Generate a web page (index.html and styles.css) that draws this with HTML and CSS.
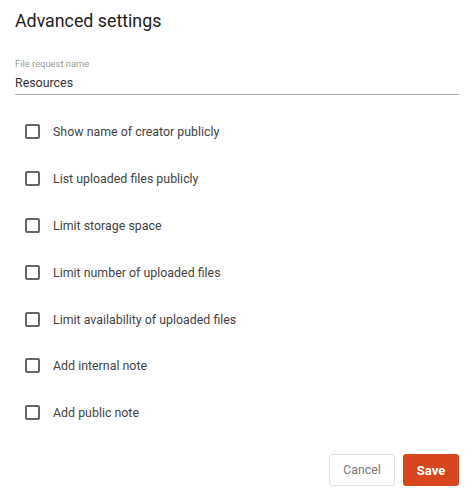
FILE: index.html
```html
<!DOCTYPE html>
<html lang="en">
<head>
<meta charset="utf-8">
<title>Advanced settings</title>
<link rel="stylesheet" href="styles.css">
</head>
<body>
<div class="dialog">
  <h1 class="title">Advanced settings</h1>
  <div class="field">
    <div class="field-label">File request name</div>
    <div class="field-value">Resources</div>
  </div>
  <ul class="options">
    <li class="option"><span class="box"></span><span class="text">Show name of creator publicly</span></li>
    <li class="option"><span class="box"></span><span class="text">List uploaded files publicly</span></li>
    <li class="option"><span class="box"></span><span class="text">Limit storage space</span></li>
    <li class="option"><span class="box"></span><span class="text">Limit number of uploaded files</span></li>
    <li class="option"><span class="box"></span><span class="text">Limit availability of uploaded files</span></li>
    <li class="option"><span class="box"></span><span class="text">Add internal note</span></li>
    <li class="option"><span class="box"></span><span class="text">Add public note</span></li>
  </ul>
  <div class="actions">
    <button class="btn btn-cancel">Cancel</button>
    <button class="btn btn-save">Save</button>
  </div>
</div>
</body>
</html>
```
FILE: styles.css
```css
html, body {
  margin: 0;
  padding: 0;
  background: #ffffff;
}
body {
  font-family: Roboto, "Liberation Sans", sans-serif;
  color: #333333;
}
.dialog {
  padding: 0 15px;
}
.title {
  margin: 0;
  padding-top: 8.6px;
  font-size: 17.8px;
  line-height: 24px;
  font-weight: 400;
  color: #222222;
}
.field {
  margin-top: 24.4px;
  border-bottom: 1.3px solid #a8a8a8;
  padding-bottom: 3.4px;
}
.field-label {
  font-size: 9.4px;
  line-height: 13px;
  color: #9a9a9a;
  margin-bottom: 4.6px;
}
.field-value {
  font-size: 12.4px;
  line-height: 16px;
  color: #333333;
}
.options {
  list-style: none;
  margin: 13.6px 0 0 0;
  padding: 0;
}
.option {
  height: 46.8px;
  display: flex;
  align-items: center;
  padding-left: 10px;
}
.box {
  width: 15px;
  height: 15px;
  box-sizing: border-box;
  border: 2px solid #666666;
  border-radius: 2px;
  flex: none;
}
.text {
  margin-left: 13px;
  font-size: 12.4px;
  color: #444444;
}
.actions {
  margin-top: 18.3px;
  display: flex;
  justify-content: flex-end;
  gap: 8px;
}
.btn {
  height: 32px;
  border-radius: 3px;
  font-family: Roboto, "Liberation Sans", sans-serif;
  font-size: 13px;
  padding: 0;
  cursor: pointer;
}
.btn-cancel {
  width: 66px;
  background: #ffffff;
  border: 1px solid #e2e2e2;
  color: #777777;
  font-size: 12.3px;
}
.btn-save {
  width: 56px;
  background: #d8461e;
  border: none;
  color: #ffffff;
  font-weight: 700;
}
```
